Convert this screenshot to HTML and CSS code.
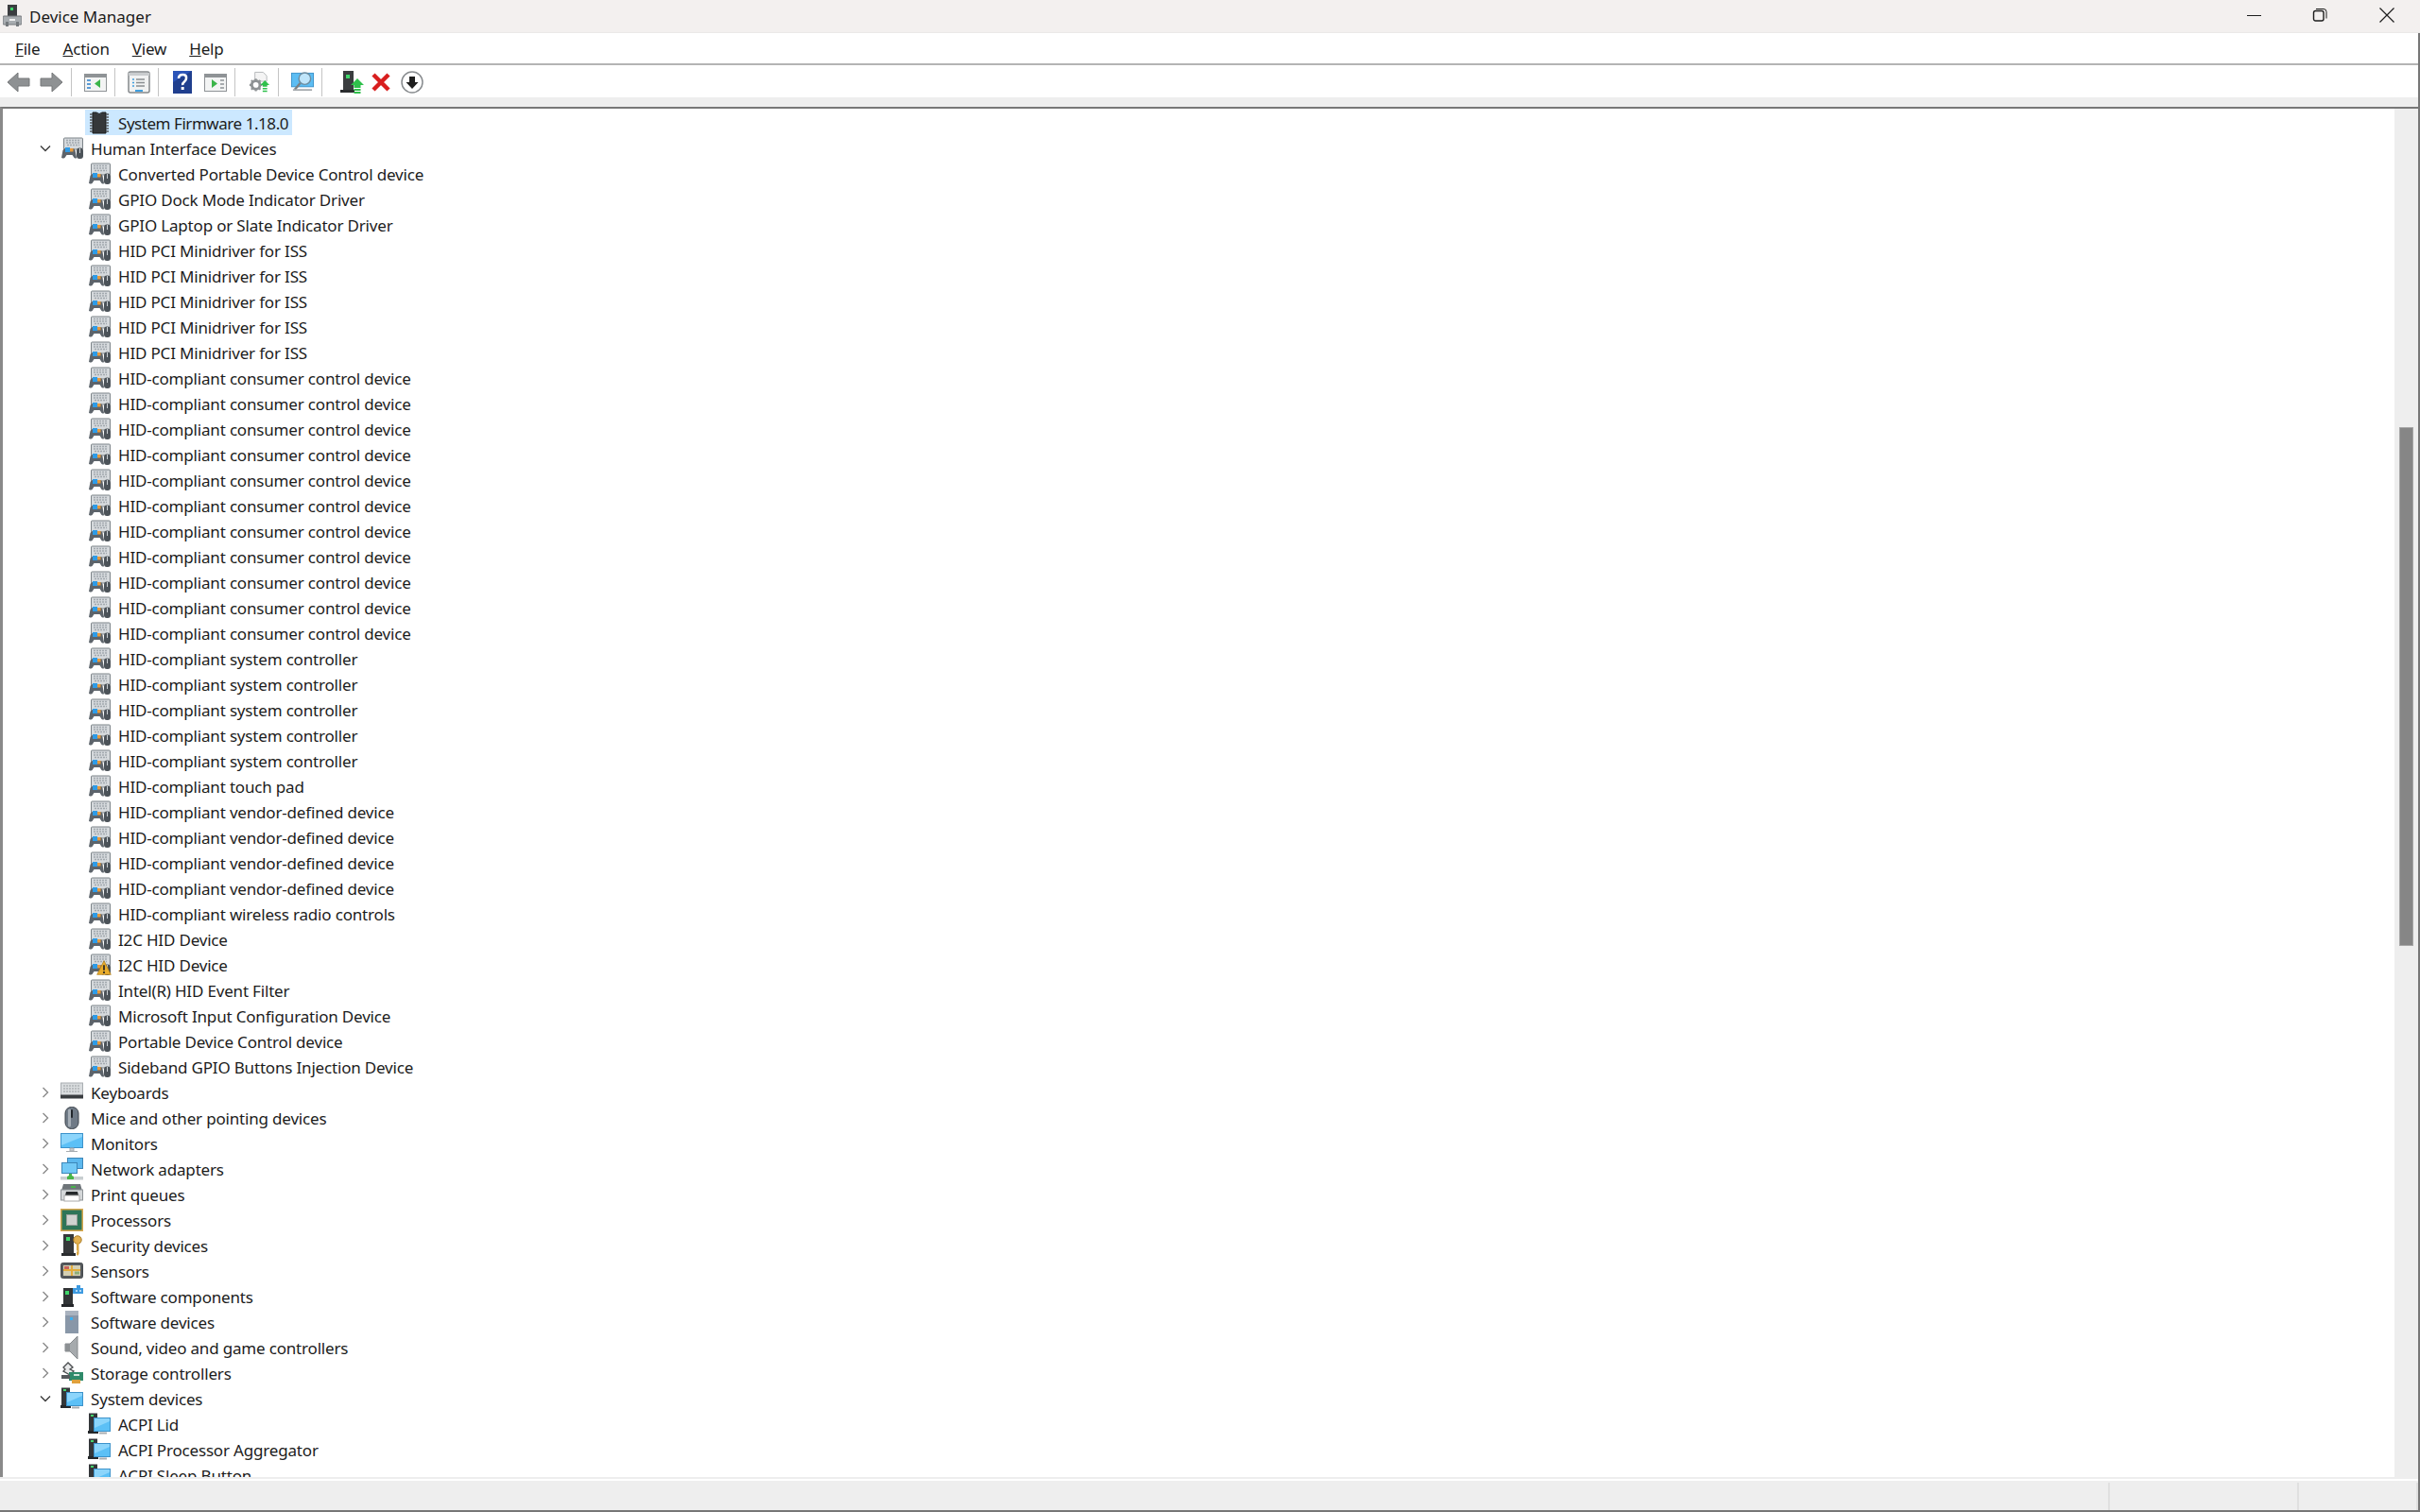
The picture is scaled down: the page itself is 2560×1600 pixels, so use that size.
FILE: index.html
```html
<!DOCTYPE html>
<html lang="en">
<head>
<meta charset="utf-8">
<title>Device Manager</title>
<link rel="stylesheet" href="styles.css">
</head>
<body>
<svg class="sprite" xmlns="http://www.w3.org/2000/svg">
  <defs>
    <symbol id="i-hid" viewBox="0 0 24 24">
      <rect x="3.500" y="1" width="20" height="12" rx="1" fill="#d5d9dc" stroke="#7d8489"/>
      <path d="M6 3.500h15M6 6h15M7 8.500h13" stroke="#a2a9ae" stroke-width="1.300" stroke-dasharray="2 1"/>
      <path d="M1 22l1.500-8q.5-2 3-2h7q2.500 0 3 2l1.500 8q-.5 1-2.500 0l-2-3h-6l-2 3q-2.500 1-3 0z" fill="#5d646b"/>
      <rect x="5" y="11" width="5" height="5" fill="#2f9be6"/>
      <rect x="10" y="12" width="3.500" height="3.500" fill="#e89a3c"/>
      <rect x="17" y="11.500" width="7" height="11.500" rx="3" fill="#4c5359"/>
      <path d="M20.500 12v5" stroke="#c9ced2"/>
    </symbol>
    <symbol id="i-chip" viewBox="0 0 24 24">
      <path d="M5 1h4q3 3 6 0h4v22H5z" fill="#35383a" stroke="#1b1c1d"/>
      <path d="M2 3h3M2 6h3M2 9h3M2 12h3M2 15h3M2 18h3M2 21h3M19 3h3M19 6h3M19 9h3M19 12h3M19 15h3M19 18h3M19 21h3" stroke="#55595c" stroke-width="1.400"/>
    </symbol>
    <symbol id="i-keyboard" viewBox="0 0 24 24">
      <rect x="0.500" y="2" width="23" height="15" fill="#d9dcde" stroke="#a9aeb2"/>
      <path d="M3 5h18M3 8h18M3 11h18" stroke="#aeb3b7" stroke-width="1.500" stroke-dasharray="2 1"/>
      <rect x="0" y="14.500" width="24" height="4" fill="#3a3d40"/>
    </symbol>
    <symbol id="i-mouse" viewBox="0 0 24 24">
      <rect x="5" y="0.500" width="14" height="23" rx="6.500" fill="#6f7a86" stroke="#3c434b"/>
      <rect x="8" y="2.500" width="3" height="19" rx="1.500" fill="#a6aeb6"/>
      <rect x="11" y="3" width="2" height="9" rx="1" fill="#22272c"/>
    </symbol>
    <symbol id="i-monitor" viewBox="0 0 24 24">
      <rect x="0.500" y="1.500" width="23" height="15" fill="#5cc0f6" stroke="#3d93cb"/>
      <path d="M1 2h22v3L1 14z" fill="#8cd5fb"/>
      <path d="M10 17h4v3h-4zM6 20.500h12" stroke="#a8adb1" fill="#c8ccd0"/>
    </symbol>
    <symbol id="i-network" viewBox="0 0 24 24">
      <rect x="7.500" y="0.500" width="16" height="11" fill="#5cb8ee" stroke="#3d86b8"/>
      <rect x="1.500" y="5.500" width="16" height="11" fill="#72c9f6" stroke="#3d86b8"/>
      <rect x="0" y="20" width="24" height="3.500" fill="#c8ced0"/>
      <path d="M7 23v-3l2-1v-2h3v2l2 1v3z" fill="#49b548"/>
    </symbol>
    <symbol id="i-printer" viewBox="0 0 24 24">
      <path d="M3 1h18l2 7H1z" fill="#6e7479"/>
      <rect x="0.500" y="7" width="23" height="11" fill="#d5d8da" stroke="#8e9397"/>
      <rect x="11" y="3" width="5" height="2" fill="#48b24c"/>
      <path d="M5 13l1-4h12l1 4z" fill="#25282a"/>
      <rect x="4" y="13" width="16" height="6" fill="#fff" stroke="#aaa"/>
    </symbol>
    <symbol id="i-cpu" viewBox="0 0 24 24">
      <rect x="0" y="0" width="24" height="24" fill="#d9a94f"/>
      <rect x="1.500" y="1.500" width="21" height="21" fill="#2f7558"/>
      <rect x="6.500" y="6.500" width="11" height="11" fill="#d0d2cf" stroke="#9aa09b"/>
    </symbol>
    <symbol id="i-security" viewBox="0 0 24 24">
      <path d="M3 0h11v20H3z" fill="#37393b"/>
      <rect x="1" y="20" width="15" height="3" fill="#2a2c2e"/>
      <rect x="6" y="3" width="4" height="4" fill="#3fd66a"/>
      <circle cx="18" cy="6" r="4.200" fill="#e3b04f" stroke="#a87b27"/>
      <path d="M17 9h2.500v12l-1.500 2-1-1.500V19l1-1-1-1z" fill="#d9a643"/>
    </symbol>
    <symbol id="i-sensors" viewBox="0 0 24 24">
      <rect x="0.500" y="3.500" width="23" height="16" rx="2" fill="#55595d" stroke="#45494c"/>
      <rect x="3" y="6" width="18" height="11" fill="#d4cfb3"/>
      <path d="M3 11h18M12 6v11" stroke="#e3ac3c" stroke-width="2"/>
      <rect x="4" y="7" width="5" height="3" fill="#c7625a"/>
      <rect x="15" y="12.500" width="5" height="3" fill="#8dae79"/>
    </symbol>
    <symbol id="i-swcomp" viewBox="0 0 24 24">
      <path d="M3 3h10v17H3z" fill="#323537"/>
      <rect x="1" y="20" width="13" height="3" fill="#25272a"/>
      <rect x="5" y="6" width="4" height="4" fill="#3fd66a"/>
      <path d="M13 3h4V0h4v3h3v6h-11z" fill="#3d9ae0"/>
      <circle cx="17" cy="6" r="1" fill="#d8eeff"/>
      <circle cx="21" cy="6" r="1" fill="#d8eeff"/>
    </symbol>
    <symbol id="i-swdev" viewBox="0 0 24 24">
      <rect x="5" y="0" width="14" height="24" fill="#8997a8"/>
      <path d="M5 0h14v5H5z" fill="#aab3bf"/>
      <rect x="10" y="7" width="3" height="3" fill="#3ab1f3"/>
    </symbol>
    <symbol id="i-sound" viewBox="0 0 24 24">
      <path d="M5 8h5l8-8v24l-8-8H5z" fill="#a6aaad" stroke="#878b8e"/>
      <path d="M5 8h5v8H5z" fill="#8c9093"/>
    </symbol>
    <symbol id="i-storage" viewBox="0 0 24 24">
      <path d="M3 6l5-5 5 5-3 2 4 2-4 4-7-4 2-2z" fill="#e8e9ea" stroke="#4b4e50" stroke-width="1.300"/>
      <rect x="9" y="11" width="15" height="9" fill="#2f8a6a"/>
      <rect x="1" y="14" width="9" height="4" fill="#55595c"/>
      <rect x="12" y="19" width="9" height="4" fill="#e0a13c"/>
      <path d="M14 14h6" stroke="#cfe3d9" stroke-width="2"/>
    </symbol>
    <symbol id="i-sys" viewBox="0 0 24 24">
      <rect x="1" y="0.500" width="9" height="19" fill="#34373a"/>
      <rect x="3" y="2" width="3" height="2" fill="#46d26c"/>
      <rect x="0" y="19" width="11" height="3" fill="#25272a"/>
      <rect x="6.500" y="5.500" width="17" height="14" fill="#5cc0f6" stroke="#3d93cb"/>
      <path d="M7 6h16v3L7 16z" fill="#8cd5fb"/>
      <path d="M12 21.500h8" stroke="#a8adb1" stroke-width="2"/>
    </symbol>
    <symbol id="i-warn" viewBox="0 0 24 24">
      <path d="M12 1l11 22H1z" fill="#e9ad2c" stroke="#a87714"/>
      <path d="M12 8v8M12 18v3" stroke="#222" stroke-width="2.500"/>
    </symbol>
    <symbol id="chev-r" viewBox="0 0 12 12">
      <path d="M3.500 1l5 5-5 5" fill="none" stroke="#8a8a8a" stroke-width="1.400"/>
    </symbol>
    <symbol id="chev-d" viewBox="0 0 12 12">
      <path d="M1 3.500l5 5 5-5" fill="none" stroke="#3c3c3c" stroke-width="1.400"/>
    </symbol>
  </defs>
</svg>

<div class="app">
  <header class="titlebar">
    <svg class="title-icon" viewBox="0 0 20 24">
      <rect x="5" y="0" width="10" height="13" fill="#3a3d40"/>
      <rect x="8" y="3" width="3" height="3" fill="#3fd66a"/>
      <rect x="0" y="12" width="20" height="9" rx="1" fill="#a8adb1" stroke="#74797d"/>
      <path d="M3 18h3v5H3zM14 18h3v5h-3z" fill="#74797d"/>
      <path d="M7 16h6" stroke="#f2f2f2" stroke-width="2"/>
    </svg>
    <span class="title-text">Device Manager</span>
    <div class="window-controls">
      <button class="win-btn" aria-label="Minimize"><svg viewBox="0 0 16 16" width="16" height="16"><path d="M0 8.500h15" stroke="#1c1c1c"/></svg></button>
      <button class="win-btn restore" aria-label="Restore"><svg viewBox="0 0 16 16" width="16" height="16"><rect x="1.500" y="3.500" width="10.500" height="10.500" rx="2" fill="none" stroke="#1c1c1c" stroke-width="1.400"/><path d="M4 1.500h8q3 0 3 3v7" fill="none" stroke="#1c1c1c"/></svg></button>
      <button class="win-btn" aria-label="Close"><svg viewBox="0 0 16 16" width="16" height="16"><path d="M.5.500l15 15M15.500.500l-15 15" stroke="#1c1c1c" stroke-width="1.200"/></svg></button>
    </div>
  </header>

  <div class="frame">
    <nav class="menubar">
      <span class="menu-item"><u>F</u>ile</span>
      <span class="menu-item"><u>A</u>ction</span>
      <span class="menu-item"><u>V</u>iew</span>
      <span class="menu-item"><u>H</u>elp</span>
    </nav>

    <div class="toolbar">
      <svg class="tool arrow" viewBox="0 0 25 24"><path d="M12 2L1 12l11 10v-6h12V8H12z" fill="#8e9193" stroke="#77797b"/></svg>
      <svg class="tool arrow tool-gap" viewBox="0 0 25 24"><path d="M13 2l11 10-11 10v-6H1V8h12z" fill="#8e9193" stroke="#77797b"/></svg>
      <i class="tsep"></i>
      <svg class="tool" viewBox="0 0 24 24"><rect x=".5" y="3.500" width="23" height="18" fill="#f3f4f4" stroke="#8f9396"/><path d="M1 4h22v3H1z" fill="#8f9396"/><path d="M3 10h4M3 14h4M3 18h4" stroke="#5b9bd5" stroke-width="2"/><path d="M17 9v9l-6-4.500z" fill="#3bb54a"/></svg>
      <i class="tsep"></i>
      <svg class="tool" viewBox="0 0 24 24"><rect x="1" y="1" width="22" height="22" rx="2" fill="#f1f2f2" stroke="#85898c" stroke-width="1.500"/><path d="M1 2h22v3H1z" fill="#c9ccce"/><path d="M9 9h9M9 12.500h9M9 16h9" stroke="#8a8e91" stroke-width="1.300"/><path d="M5 9h2M5 12.500h2M5 16h2" stroke="#3f9fe0" stroke-width="1.500"/><path d="M8 21h8" stroke="#3f9fe0" stroke-width="2"/></svg>
      <i class="tsep"></i>
      <svg class="tool tool-help" viewBox="0 0 20 24"><rect width="20" height="24" fill="#2b54b8"/><path d="M0 24V12L20 0v24z" fill="#203f8e"/><path d="M6 8q0-4 4.300-4T14 8q0 2-2 3.500t-1.700 3.500" fill="none" stroke="#fff" stroke-width="2.600"/><rect x="8.700" y="17" width="3" height="3" fill="#fff"/></svg>
      <svg class="tool" viewBox="0 0 24 24"><rect x=".5" y="3.500" width="23" height="18" fill="#f3f4f4" stroke="#8f9396"/><path d="M1 4h22v3H1z" fill="#8f9396"/><path d="M17 10h4M17 14h4M17 18h4" stroke="#8f9396" stroke-width="1.500"/><path d="M8 9v9l6-4.500z" fill="#3bb54a"/></svg>
      <i class="tsep"></i>
      <svg class="tool" viewBox="0 0 25 24"><path d="M8 1h9l4 4v6H8z" fill="#f4f4f4" stroke="#b5b8ba"/><circle cx="9" cy="15" r="4.500" fill="none" stroke="#8e9294" stroke-width="3"/><path d="M9 8v2M9 20v2M2 15h2M14 15h2M4 10l1.500 1.500M14 10l-1.500 1.500M4 20l1.500-1.500M14 20l-1.500-1.500" stroke="#8e9294" stroke-width="2.200"/><path d="M19 10l5 5h-2.500v2h-5v-2H14z" fill="#2fc04b"/><path d="M16.500 19h5M16.500 22h5" stroke="#2fc04b" stroke-width="1.600"/></svg>
      <i class="tsep"></i>
      <svg class="tool" viewBox="0 0 25 24"><rect x=".5" y="2" width="24" height="15" fill="#5cbdf3" stroke="#3d93cb"/><circle cx="15" cy="8" r="6.500" fill="#bfe5fa" stroke="#6d8da0" stroke-width="1.500"/><path d="M10 13l-6 7" stroke="#7a8084" stroke-width="2.500"/><path d="M2 20.500h21" stroke="#a2a7ab" stroke-width="1.800"/></svg>
      <i class="tsep"></i>
      <svg class="tool tool-dev" viewBox="0 0 25 24"><path d="M3 0h11v20H3z" fill="#3a3d3f"/><rect x="0" y="20" width="15" height="3" fill="#2a2c2e"/><rect x="6" y="4" width="4" height="4" fill="#3fd66a"/><path d="M18 8l7 7h-3.500v3h-7v-3H11z" fill="#2fc04b"/><path d="M14.500 20h7M14.500 23h7" stroke="#2fc04b" stroke-width="1.800"/></svg>
      <svg class="tool tool-x" viewBox="0 0 20 20"><path d="M2 2l16 16M18 2L2 18" stroke="#d81e1e" stroke-width="4.500"/></svg>
      <svg class="tool tool-down" viewBox="0 0 24 24"><circle cx="12" cy="12" r="11" fill="#fff" stroke="#888c8f" stroke-width="1.500"/><path d="M9 6h6v6h3.500L12 19l-6.500-7H9z" fill="#1e1e1e"/></svg>
    </div>

    <div class="strip"></div>

    <main class="pane">
      <div class="tree">
        <div class="row l2 selected"><svg class="ico"><use href="#i-chip"/></svg><span class="tight">System Firmware 1.18.0</span></div>
        <div class="row l1"><svg class="chev"><use href="#chev-d"/></svg><svg class="ico"><use href="#i-hid"/></svg><span>Human Interface Devices</span></div>
        <div class="row l2"><svg class="ico"><use href="#i-hid"/></svg><span>Converted Portable Device Control device</span></div>
        <div class="row l2"><svg class="ico"><use href="#i-hid"/></svg><span>GPIO Dock Mode Indicator Driver</span></div>
        <div class="row l2"><svg class="ico"><use href="#i-hid"/></svg><span>GPIO Laptop or Slate Indicator Driver</span></div>
        <div class="row l2"><svg class="ico"><use href="#i-hid"/></svg><span>HID PCI Minidriver for ISS</span></div>
        <div class="row l2"><svg class="ico"><use href="#i-hid"/></svg><span>HID PCI Minidriver for ISS</span></div>
        <div class="row l2"><svg class="ico"><use href="#i-hid"/></svg><span>HID PCI Minidriver for ISS</span></div>
        <div class="row l2"><svg class="ico"><use href="#i-hid"/></svg><span>HID PCI Minidriver for ISS</span></div>
        <div class="row l2"><svg class="ico"><use href="#i-hid"/></svg><span>HID PCI Minidriver for ISS</span></div>
        <div class="row l2"><svg class="ico"><use href="#i-hid"/></svg><span>HID-compliant consumer control device</span></div>
        <div class="row l2"><svg class="ico"><use href="#i-hid"/></svg><span>HID-compliant consumer control device</span></div>
        <div class="row l2"><svg class="ico"><use href="#i-hid"/></svg><span>HID-compliant consumer control device</span></div>
        <div class="row l2"><svg class="ico"><use href="#i-hid"/></svg><span>HID-compliant consumer control device</span></div>
        <div class="row l2"><svg class="ico"><use href="#i-hid"/></svg><span>HID-compliant consumer control device</span></div>
        <div class="row l2"><svg class="ico"><use href="#i-hid"/></svg><span>HID-compliant consumer control device</span></div>
        <div class="row l2"><svg class="ico"><use href="#i-hid"/></svg><span>HID-compliant consumer control device</span></div>
        <div class="row l2"><svg class="ico"><use href="#i-hid"/></svg><span>HID-compliant consumer control device</span></div>
        <div class="row l2"><svg class="ico"><use href="#i-hid"/></svg><span>HID-compliant consumer control device</span></div>
        <div class="row l2"><svg class="ico"><use href="#i-hid"/></svg><span>HID-compliant consumer control device</span></div>
        <div class="row l2"><svg class="ico"><use href="#i-hid"/></svg><span>HID-compliant consumer control device</span></div>
        <div class="row l2"><svg class="ico"><use href="#i-hid"/></svg><span>HID-compliant system controller</span></div>
        <div class="row l2"><svg class="ico"><use href="#i-hid"/></svg><span>HID-compliant system controller</span></div>
        <div class="row l2"><svg class="ico"><use href="#i-hid"/></svg><span>HID-compliant system controller</span></div>
        <div class="row l2"><svg class="ico"><use href="#i-hid"/></svg><span>HID-compliant system controller</span></div>
        <div class="row l2"><svg class="ico"><use href="#i-hid"/></svg><span>HID-compliant system controller</span></div>
        <div class="row l2"><svg class="ico"><use href="#i-hid"/></svg><span>HID-compliant touch pad</span></div>
        <div class="row l2"><svg class="ico"><use href="#i-hid"/></svg><span>HID-compliant vendor-defined device</span></div>
        <div class="row l2"><svg class="ico"><use href="#i-hid"/></svg><span>HID-compliant vendor-defined device</span></div>
        <div class="row l2"><svg class="ico"><use href="#i-hid"/></svg><span>HID-compliant vendor-defined device</span></div>
        <div class="row l2"><svg class="ico"><use href="#i-hid"/></svg><span>HID-compliant vendor-defined device</span></div>
        <div class="row l2"><svg class="ico"><use href="#i-hid"/></svg><span>HID-compliant wireless radio controls</span></div>
        <div class="row l2"><svg class="ico"><use href="#i-hid"/></svg><span>I2C HID Device</span></div>
        <div class="row l2"><svg class="ico"><use href="#i-hid"/></svg><svg class="badge"><use href="#i-warn"/></svg><span>I2C HID Device</span></div>
        <div class="row l2"><svg class="ico"><use href="#i-hid"/></svg><span>Intel(R) HID Event Filter</span></div>
        <div class="row l2"><svg class="ico"><use href="#i-hid"/></svg><span>Microsoft Input Configuration Device</span></div>
        <div class="row l2"><svg class="ico"><use href="#i-hid"/></svg><span>Portable Device Control device</span></div>
        <div class="row l2"><svg class="ico"><use href="#i-hid"/></svg><span>Sideband GPIO Buttons Injection Device</span></div>
        <div class="row l1"><svg class="chev"><use href="#chev-r"/></svg><svg class="ico"><use href="#i-keyboard"/></svg><span>Keyboards</span></div>
        <div class="row l1"><svg class="chev"><use href="#chev-r"/></svg><svg class="ico"><use href="#i-mouse"/></svg><span>Mice and other pointing devices</span></div>
        <div class="row l1"><svg class="chev"><use href="#chev-r"/></svg><svg class="ico"><use href="#i-monitor"/></svg><span>Monitors</span></div>
        <div class="row l1"><svg class="chev"><use href="#chev-r"/></svg><svg class="ico"><use href="#i-network"/></svg><span>Network adapters</span></div>
        <div class="row l1"><svg class="chev"><use href="#chev-r"/></svg><svg class="ico"><use href="#i-printer"/></svg><span>Print queues</span></div>
        <div class="row l1"><svg class="chev"><use href="#chev-r"/></svg><svg class="ico"><use href="#i-cpu"/></svg><span>Processors</span></div>
        <div class="row l1"><svg class="chev"><use href="#chev-r"/></svg><svg class="ico"><use href="#i-security"/></svg><span>Security devices</span></div>
        <div class="row l1"><svg class="chev"><use href="#chev-r"/></svg><svg class="ico"><use href="#i-sensors"/></svg><span>Sensors</span></div>
        <div class="row l1"><svg class="chev"><use href="#chev-r"/></svg><svg class="ico"><use href="#i-swcomp"/></svg><span>Software components</span></div>
        <div class="row l1"><svg class="chev"><use href="#chev-r"/></svg><svg class="ico"><use href="#i-swdev"/></svg><span>Software devices</span></div>
        <div class="row l1"><svg class="chev"><use href="#chev-r"/></svg><svg class="ico"><use href="#i-sound"/></svg><span>Sound, video and game controllers</span></div>
        <div class="row l1"><svg class="chev"><use href="#chev-r"/></svg><svg class="ico"><use href="#i-storage"/></svg><span>Storage controllers</span></div>
        <div class="row l1"><svg class="chev"><use href="#chev-d"/></svg><svg class="ico"><use href="#i-sys"/></svg><span>System devices</span></div>
        <div class="row l2"><svg class="ico"><use href="#i-sys"/></svg><span>ACPI Lid</span></div>
        <div class="row l2"><svg class="ico"><use href="#i-sys"/></svg><span>ACPI Processor Aggregator</span></div>
        <div class="row l2"><svg class="ico"><use href="#i-sys"/></svg><span>ACPI Sleep Button</span></div>
      </div>
      <div class="scrollbar"><div class="thumb"></div></div>
    </main>

    <footer class="statusbar">
      <div class="status-cell grow"></div>
      <div class="status-cell mid"></div>
      <div class="status-cell end"></div>
    </footer>
  </div>
</div>
</body>
</html>
```

FILE: styles.css
```css
* { box-sizing: border-box; }
html, body { margin: 0; padding: 0; height: 100%; overflow: hidden; background: #fff; }
body { font-family: "Noto Sans", "Open Sans", sans-serif; font-size: 17px; letter-spacing: -0.18px; color: #1c1c1c; }
.sprite { position: absolute; width: 0; height: 0; }

.app { display: flex; flex-direction: column; width: 2560px; height: 1600px; }

.titlebar { flex: 0 0 35px; display: flex; align-items: center; background: #f3f0ef; padding-left: 3px; border-bottom: 1px solid #ebe9e8; }
.title-icon { width: 20px; height: 24px; margin-right: 8px; }
.title-text { font-size: 17px; letter-spacing: 0; color: #1a1a1a; }
.window-controls { margin-left: auto; display: flex; height: 100%; padding-bottom: 2px; }
.win-btn { width: 70px; height: 100%; border: 0; padding: 0; background: transparent; display: flex; align-items: center; justify-content: center; }
.restore { padding-right: 2px; }

.frame { flex: 1; min-height: 0; display: flex; flex-direction: column; border-right: 2px solid #777; border-bottom: 2px solid #777; }

.menubar { flex: 0 0 34px; display: flex; align-items: center; gap: 24px; padding: 1px 0 0 16px; background: #fff; border-bottom: 2px solid #b4b4b4; }
.menu-item { font-size: 17px; color: #1c1c1c; }

.toolbar { flex: 0 0 34px; display: flex; align-items: center; padding: 2px 0 0 7px; background: #fff; }
.tool { width: 24px; height: 24px; flex: none; }
.arrow { width: 25px; }
.tool-gap { margin-left: 10px; }
.tool-help { width: 20px; margin: 0 13px 0 2px; }
.tool-dev { width: 25px; margin: 0 8px 0 6px; }
.tool-x { width: 20px; height: 20px; margin-right: 11px; }
.tsep { flex: none; width: 1px; height: 30px; background: #c4c4c4; margin: 0 13px 0 8px; }

.strip { flex: 0 0 10px; background: #eeeeee; }

.pane { flex: 1; min-height: 0; display: flex; border-top: 2px solid #777; border-left: 3px solid #8a8a8a; }
.tree { flex: 1; min-width: 0; overflow: hidden; padding-top: 1px; background: #fff; }

.row { height: 27px; display: flex; align-items: center; white-space: nowrap; color: #1c1c1c; position: relative; }
.row span { padding-top: 2px; }
.tight { letter-spacing: -0.45px; }
.l1 { padding-left: 39px; }
.l2 { margin-left: 87px; padding: 0 4px 0 3px; width: fit-content; }
.selected { background: #cce8ff; }
.chev { width: 12px; height: 12px; flex: none; margin-right: 10px; }
.ico { width: 24px; height: 24px; flex: none; margin-right: 8px; }
.badge { position: absolute; left: 12px; top: 9px; width: 16px; height: 16px; }

.scrollbar { flex: 0 0 25px; background: #eeeeee; padding: 337px 5px 0; }
.thumb { width: 15px; height: 549px; background: #868686; border: 1px solid #a6a6a6; }

.statusbar { flex: 0 0 33px; display: flex; background: #eeeeee; border-top: 2px solid #fff; box-shadow: 0 -2px 0 #eeeeee; position: relative; }
.status-cell { border-left: 2px solid #e0e0e0; margin-top: 2px; }
.grow { flex: 1; border-left: 0; }
.mid { flex: 0 0 200px; }
.end { flex: 0 0 128px; border-right: 2px solid #e0e0e0; }
```
